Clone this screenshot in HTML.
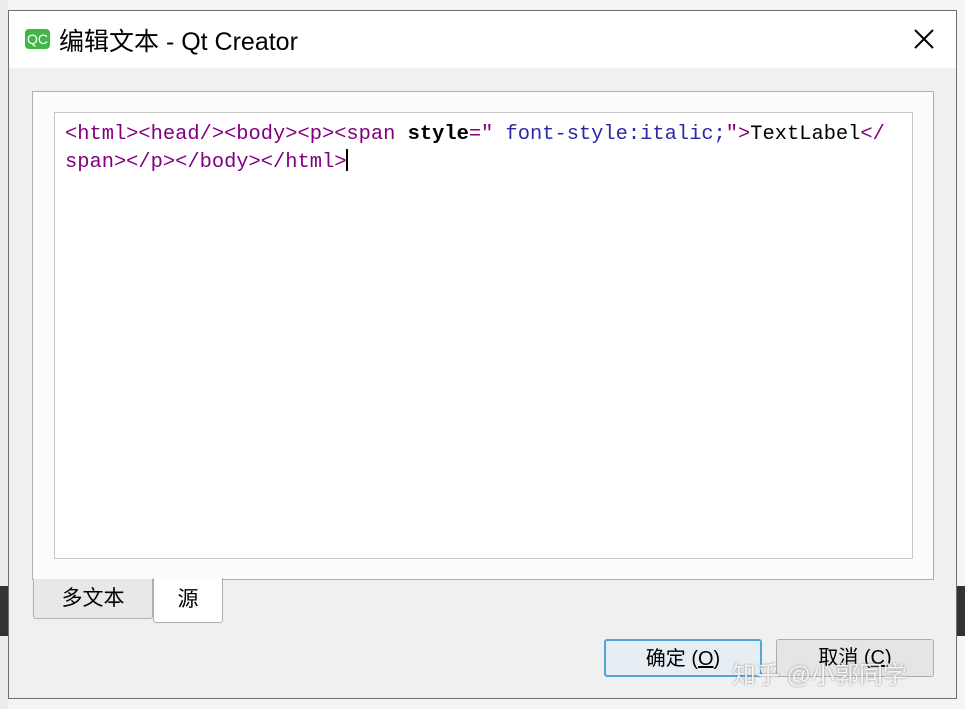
<!DOCTYPE html>
<html><head><meta charset="utf-8"><style>
body{margin:0;width:965px;height:709px;position:relative;overflow:hidden;background:#f4f4f4;font-family:"Liberation Sans","Noto Sans CJK SC",sans-serif}
.abs{position:absolute}
.dlg{left:8px;top:10px;width:949px;height:689px;border:1px solid #707070;background:#f0f0f0;box-sizing:border-box}
.title{left:0;top:0;width:947px;height:57px;background:#fff}
.code{font-family:"Liberation Mono","Noto Sans CJK SC",monospace;font-size:20.4px;line-height:28px;color:#800080;white-space:pre}
.b{color:#000;font-weight:bold}.v{color:#2a2aa8}.t{color:#000}
.btn{height:38px;width:158px;border:1px solid #adadad;border-radius:3px;background:#e5e5e5;box-sizing:border-box;text-align:center;line-height:36px;font-size:20px;color:#000}
</style></head><body>
<div class="abs" style="left:0;top:0;width:8px;height:709px;background:#ececec"></div>
<div class="abs" style="left:0;top:586px;width:8px;height:50px;background:#333"></div>
<div class="abs" style="left:957px;top:586px;width:8px;height:50px;background:#333"></div>
<div class="abs dlg">
 <div class="abs title">
  <div class="abs" style="left:16px;top:18px;width:25px;height:20px;background:#41b545;border-radius:4px;color:#fff;font-size:14px;line-height:20px;text-align:center">QC</div>
  <div class="abs" style="left:50px;top:11px;font-size:25px;color:#000">编辑文本 - Qt Creator</div>
  <svg class="abs" style="left:904px;top:17px" width="22" height="22"><path d="M2 2L20 20M20 2L2 20" stroke="#000" stroke-width="2"/></svg>
 </div>
 <div class="abs" style="left:23px;top:80px;width:902px;height:489px;border:1px solid #b0b0b0;background:#fcfcfc;box-sizing:border-box"></div>
 <div class="abs" style="left:45px;top:101px;width:859px;height:447px;border:1px solid #c8c8c8;background:#fff;box-sizing:border-box">
  <div class="abs code" style="left:10px;top:8px">&lt;html&gt;&lt;head/&gt;&lt;body&gt;&lt;p&gt;&lt;span <span class="b">style</span>=" <span class="v">font-style:italic;</span>"&gt;<span class="t">TextLabel</span>&lt;/
span&gt;&lt;/p&gt;&lt;/body&gt;&lt;/html&gt;<span style="display:inline-block;width:2px;height:22px;background:#000;vertical-align:-4px"></span></div>
 </div>
 <div class="abs" style="left:24px;top:568px;width:120px;height:40px;background:#e8e8e8;border:1px solid #b0b0b0;border-top:none;border-radius:0 0 3px 3px;box-sizing:border-box;text-align:center;line-height:40px;font-size:21px">多文本</div>
 <div class="abs" style="left:144px;top:567px;width:70px;height:45px;background:#fff;border:1px solid #b0b0b0;border-top:none;border-radius:0 0 3px 3px;box-sizing:border-box;text-align:center;line-height:44px;font-size:21px">源</div>
 <div class="abs btn" style="left:595px;top:628px;border:2px solid #52a6d8;background:#e6eef4">确定 (<u>O</u>)</div>
 <div class="abs btn" style="left:767px;top:628px">取消 (<u>C</u>)</div>
 <div class="abs" style="left:723px;top:644px;font-size:24px;color:rgba(255,255,255,.85);text-shadow:0 0 2px #888">知乎 @小郭同学</div>
</div>
</body></html>
